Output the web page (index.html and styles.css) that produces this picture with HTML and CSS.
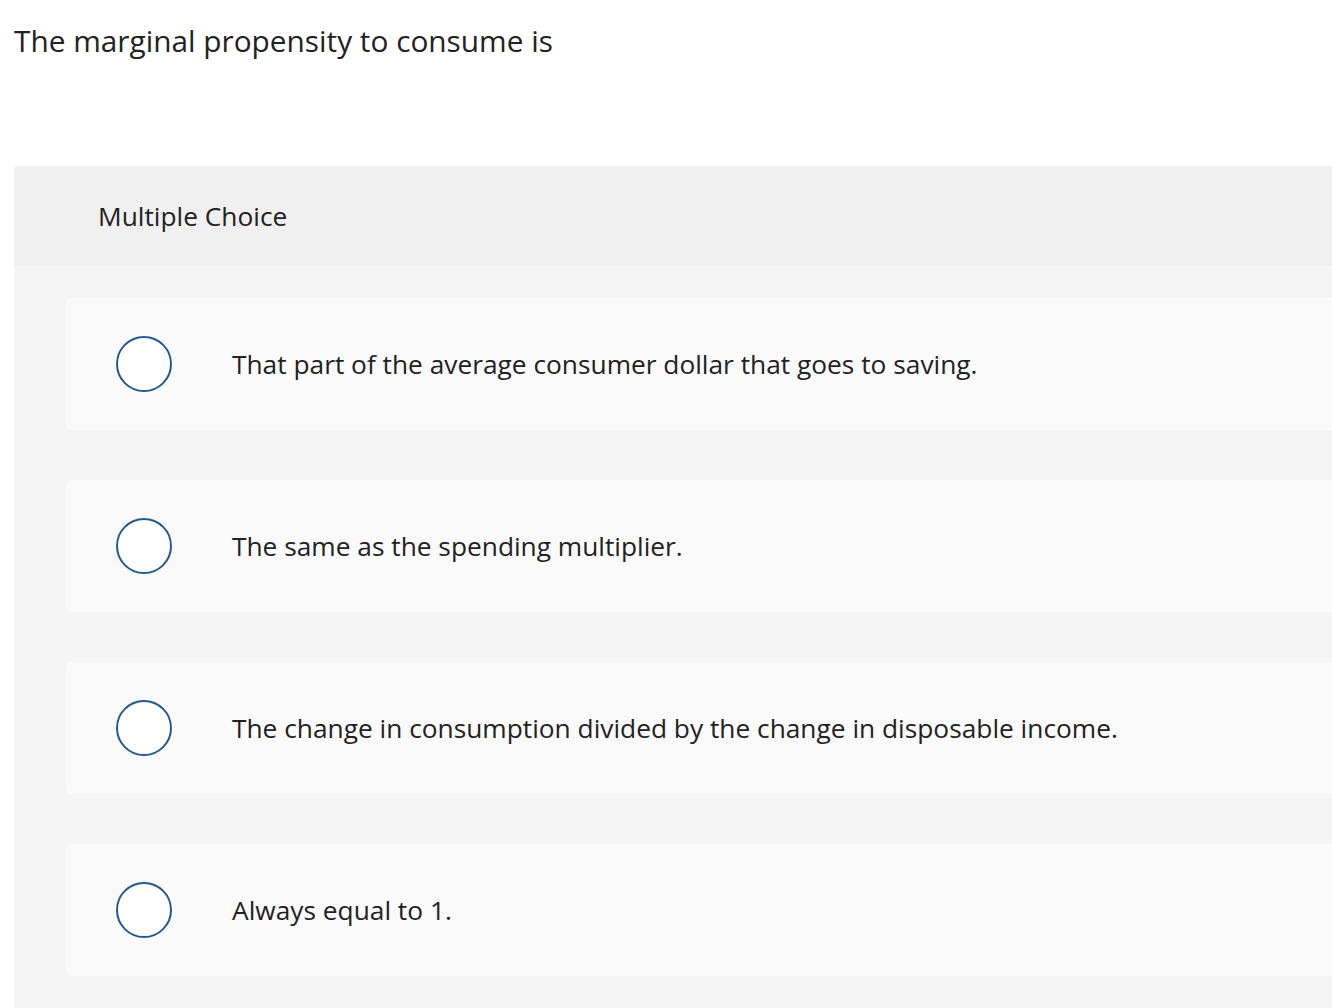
FILE: index.html
```html
<!DOCTYPE html>
<html lang="en">
<head>
    <meta charset="UTF-8">
    <title>Multiple Choice</title>
    <link rel="stylesheet" href="styles.css">
</head>
<body>
    <div class="question">The marginal propensity to consume is</div>

    <div class="panel">
        <div class="panel-header">Multiple Choice</div>
        <div class="choices">
            <label class="choice">
                <span class="radio"></span>
                <span class="choice-text">That part of the average consumer dollar that goes to saving.</span>
            </label>
            <label class="choice">
                <span class="radio"></span>
                <span class="choice-text">The same as the spending multiplier.</span>
            </label>
            <label class="choice">
                <span class="radio"></span>
                <span class="choice-text">The change in consumption divided by the change in disposable income.</span>
            </label>
            <label class="choice">
                <span class="radio"></span>
                <span class="choice-text">Always equal to 1.</span>
            </label>
        </div>
    </div>
</body>
</html>
```

FILE: styles.css
```css
body {
    font-family: "Open Sans", Arial, sans-serif;
    margin: 0;
    padding: 0;
    background-color: #fff;
    color: #222;
}
.question {
    font-size: 29.8px;
    line-height: 36px;
    padding: 23px 14px 0;
    height: 166px;
    box-sizing: border-box;
}
.panel {
    margin-left: 14px;
    background-color: #f5f5f5;
    border-radius: 4px 0 0 0;
    overflow: hidden;
    height: 842px;
}
.panel-header {
    background-color: #f0f0f0;
    height: 100px;
    padding-left: 84px;
    display: flex;
    align-items: center;
    font-size: 26.3px;
}
.choices {
    padding: 32px 0 0 52px;
    display: flex;
    flex-direction: column;
    gap: 50px;
}
.choice {
    background-color: #fafafa;
    border-radius: 5px 0 0 5px;
    height: 132px;
    display: flex;
    align-items: center;
    padding-left: 50px;
    cursor: pointer;
}
.radio {
    width: 52px;
    height: 52px;
    border: 2px solid #245a8f;
    border-radius: 50%;
    background-color: #fff;
    flex-shrink: 0;
}
.choice-text {
    margin-left: 60px;
    font-size: 26.3px;
}
```
